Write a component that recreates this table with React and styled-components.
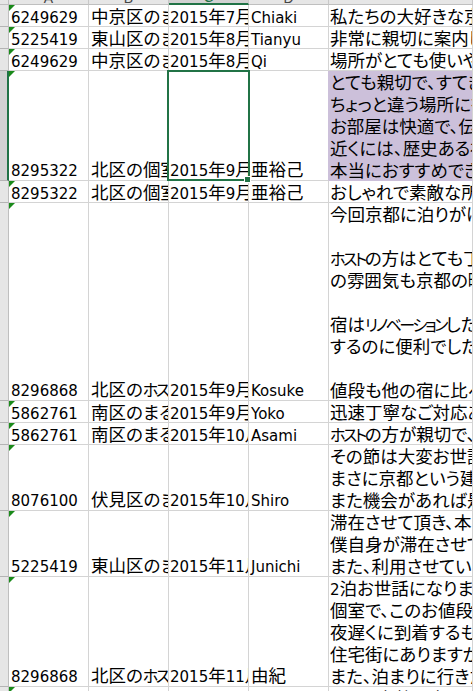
import React from 'react';
import styled, { createGlobalStyle } from 'styled-components';

const Global = createGlobalStyle`
  html, body { margin: 0; padding: 0; background: #ffffff; }
  body { font-family: "Noto Sans CJK JP", sans-serif; overflow: hidden; }
`;

const LINE = 22;
const GRID = '#d4d4d4';
const GREEN = '#217346';

const Sheet = styled.div`
  display: grid;
  grid-template-columns: 9px 80px 80px 80px 80px 1fr;
  width: 473px;
  height: 691px;
  overflow: hidden;
  background: #ffffff;
`;

const Corner = styled.div`
  box-sizing: border-box;
  height: 5px;
  background: #e6e6e6;
  border-right: 1px solid #bfbfbf;
  border-bottom: 1px solid #bfbfbf;
`;

const ColHead = styled.div`
  box-sizing: border-box;
  height: 5px;
  background: ${p => (p.$active ? '#d2d2d2' : '#e6e6e6')};
  border-right: 1px solid #c8c8c8;
  border-bottom: ${p => (p.$active ? `2px solid ${GREEN}` : '1px solid #bfbfbf')};
  overflow: hidden;
  display: flex;
  justify-content: center;
  align-items: flex-end;
  color: ${p => (p.$active ? GREEN : '#444444')};
  font-family: "Liberation Sans", Arial, sans-serif;
  font-size: 14px;
  line-height: 14px;
`;

const HeadLetter = styled.span`
  margin-bottom: -1px;
`;

const RowHead = styled.div`
  box-sizing: border-box;
  height: ${p => p.$lines * LINE}px;
  background: ${p => (p.$active ? '#d2d2d2' : '#e6e6e6')};
  border-right: ${p => (p.$active ? `2px solid ${GREEN}` : '1px solid #bfbfbf')};
  border-bottom: 1px solid #b4b4b4;
`;

const Cell = styled.div`
  position: relative;
  box-sizing: border-box;
  height: ${p => p.$lines * LINE}px;
  border-right: 1px solid ${p => p.$edge || GRID};
  border-bottom: 1px solid ${p => p.$fill || GRID};
  background: ${p => p.$fill || '#ffffff'};
  display: flex;
  flex-direction: column;
  justify-content: flex-end;
  min-width: 0;
`;

const Clip = styled.div`
  overflow: hidden;
  padding-left: ${p => p.$pad ?? 2}px;
  font-size: 17.5px;
  line-height: ${LINE}px;
  color: #000000;
  white-space: pre;
`;

const Line = styled.div`
  height: ${LINE}px;
`;

const Latin = styled.span`
  font-family: "DejaVu Sans", "Noto Sans CJK JP", sans-serif;
  font-size: 15px;
`;

const Kana = styled.span`
  font-feature-settings: "palt";
`;

const Katakana = styled.span`
  font-feature-settings: "palt";
  font-size: 16px;
  letter-spacing: -2.5px;
`;

const Flag = styled.span`
  position: absolute;
  left: 0;
  top: 0;
  width: 0;
  height: 0;
  border-top: 6px solid #1a8a1a;
  border-right: 6px solid transparent;
  z-index: 1;
`;

const Selection = styled.div`
  position: absolute;
  left: -2px;
  top: -1px;
  width: 83px;
  height: 111px;
  box-sizing: border-box;
  border: 2px solid ${GREEN};
  z-index: 3;
  pointer-events: none;
`;

const Handle = styled.span`
  position: absolute;
  left: 75px;
  top: 104px;
  width: 7px;
  height: 7px;
  box-sizing: border-box;
  background: ${GREEN};
  border: 1px solid #ffffff;
`;

const ASCII_RE = /[\x20-\x7e]/;
const KATA_RE = /[\u30A0-\u30FF]/;
const KANA_RE = /[\u3000-\u303F\u3040-\u309F]/;

function kindOf(ch) {
  if (ASCII_RE.test(ch)) return 'latin';
  if (KATA_RE.test(ch)) return 'kata';
  if (KANA_RE.test(ch)) return 'kana';
  return 'cjk';
}

function Rich({ text }) {
  const parts = [];
  let cur = null;
  for (const ch of text) {
    const k = kindOf(ch);
    if (cur && cur.k === k) cur.s += ch;
    else {
      cur = { k, s: ch };
      parts.push(cur);
    }
  }
  return parts.map((p, i) => {
    if (p.k === 'latin') return <Latin key={i}>{p.s}</Latin>;
    if (p.k === 'kata') return <Katakana key={i}>{p.s}</Katakana>;
    if (p.k === 'kana') return <Kana key={i}>{p.s}</Kana>;
    return <React.Fragment key={i}>{p.s}</React.Fragment>;
  });
}

const rows = [
  { lines: 1, id: '6249629', area: '中京区のまちや', date: '2015年7月', name: 'Chiaki', text: ['私たちの大好きな京都の街で過ごせました'] },
  { lines: 1, id: '5225419', area: '東山区のまちや', date: '2015年8月', name: 'Tianyu', text: ['非常に親切に案内していただきました'] },
  { lines: 1, id: '6249629', area: '中京区のまちや', date: '2015年8月', name: 'Qi', text: ['場所がとても使いやすく便利でした'] },
  {
    lines: 5, id: '8295322', area: '北区の個室', date: '2015年9月', name: '亜裕己', fill: '#ccc0da', active: true,
    text: ['とても親切で、すてきな宿でした', 'ちょっと違う場所に行ってしまいましたが', 'お部屋は快適で、伝統的な雰囲気', '近くには、歴史ある神社もあります', '本当におすすめできます'],
  },
  { lines: 1, id: '8295322', area: '北区の個室', date: '2015年9月', name: '亜裕己', text: ['おしゃれで素敵な所でした'] },
  {
    lines: 9, id: '8296868', area: '北区のホステル', date: '2015年9月', name: 'Kosuke',
    text: ['今回京都に泊りがけで訪れました', '', 'ホストの方はとても丁寧で、宿', 'の雰囲気も京都の町家らしく', '', '宿はリノベーションした町家で', 'するのに便利でした。', '', '値段も他の宿に比べて安く'],
  },
  { lines: 1, id: '5862761', area: '南区のまるや', date: '2015年9月', name: 'Yoko', text: ['迅速丁寧なご対応ありがとう'] },
  { lines: 1, id: '5862761', area: '南区のまるや', date: '2015年10月', name: 'Asami', text: ['ホストの方が親切で、快適'] },
  {
    lines: 3, id: '8076100', area: '伏見区のまちや', date: '2015年10月', name: 'Shiro',
    text: ['その節は大変お世話になりました', 'まさに京都という建物で', 'また機会があれば是非'],
  },
  {
    lines: 3, id: '5225419', area: '東山区のまちや', date: '2015年11月', name: 'Junichi',
    text: ['滞在させて頂き、本当に', '僕自身が滞在させていただき', 'また、利用させていただきます'],
  },
  {
    lines: 5, id: '8296868', area: '北区のホステル', date: '2015年11月', name: '由紀',
    text: ['2泊お世話になりました', '個室で、このお値段は', '夜遅くに到着するも', '住宅街にありますが', 'また、泊まりに行きたい'],
  },
  {
    lines: 4, id: '6249629', area: '中京区のまちや', date: '2015年11月', name: 'Mika',
    text: ['とても素敵な宿でした', '京都らしい町家で', '駅からも近く', 'また来たいです'],
  },
];

const Lines = ({ items }) =>
  items.map((t, i) => (
    <Line key={i}>{t ? <Rich text={t} /> : ' '}</Line>
  ));

export default function App() {
  return (
    <>
      <Global />
      <Sheet>
        <Corner />
        <ColHead><HeadLetter>A</HeadLetter></ColHead>
        <ColHead><HeadLetter>B</HeadLetter></ColHead>
        <ColHead $active><HeadLetter>C</HeadLetter></ColHead>
        <ColHead><HeadLetter>D</HeadLetter></ColHead>
        <ColHead />
        {rows.map((r, i) => (
          <React.Fragment key={i}>
            <RowHead $lines={r.lines} $active={r.active} />
            <Cell $lines={r.lines}>
              <Flag />
              <Clip><Line><Rich text={r.id} /></Line></Clip>
            </Cell>
            <Cell $lines={r.lines}>
              <Clip><Line><Rich text={r.area} /></Line></Clip>
            </Cell>
            <Cell $lines={r.lines}>
              <Clip $pad={1}><Line><Rich text={r.date} /></Line></Clip>
              {r.active && (
                <Selection>
                  <Handle />
                </Selection>
              )}
            </Cell>
            <Cell $lines={r.lines} $edge={r.fill}>
              <Clip><Line><Rich text={r.name} /></Line></Clip>
            </Cell>
            <Cell $lines={r.lines} $fill={r.fill}>
              <Clip $pad={1}><Lines items={r.text} /></Clip>
            </Cell>
          </React.Fragment>
        ))}
      </Sheet>
    </>
  );
}
